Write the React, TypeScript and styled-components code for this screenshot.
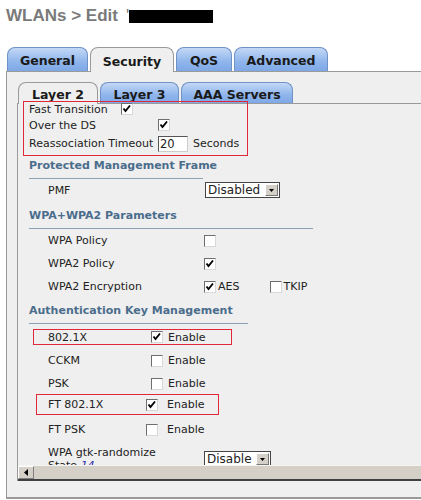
import styled, { createGlobalStyle } from 'styled-components'

const Global = createGlobalStyle`
  html, body {
    margin: 0;
    padding: 0;
    background: #fff;
    overflow: hidden;
  }
  body {
    font-family: "DejaVu Sans", Verdana, sans-serif;
    font-size: 11px;
    color: #222;
  }
`

const Page = styled.div`
  width: 421px;
  height: 500px;
  overflow: hidden;
  padding: 5px 0 0 6px;
  box-sizing: border-box;
`

const Header = styled.div`
  display: flex;
  align-items: center;
  height: 22px;
`

const Title = styled.h1`
  margin: 0;
  font-family: "Liberation Sans", Arial, sans-serif;
  font-size: 17px;
  font-weight: bold;
  color: #7a7a7a;
`

const Quote = styled.span`
  font-family: "Liberation Sans", Arial, sans-serif;
  font-size: 17px;
  color: #7a7a7a;
  margin-left: 8px;
`

const Redacted = styled.span`
  display: inline-block;
  width: 84px;
  height: 13px;
  background: #000;
`

const TabBar = styled.div<{ $top: number; $gap: number }>`
  display: flex;
  align-items: flex-end;
  gap: ${(p) => p.$gap}px;
  margin-top: ${(p) => p.$top}px;
  padding-left: 1px;
  position: relative;
  z-index: 1;
`

const Tab = styled.div<{ $w: number; $active?: boolean; $h: number }>`
  width: ${(p) => p.$w}px;
  height: ${(p) => (p.$active ? p.$h + 1 : p.$h)}px;
  box-sizing: border-box;
  display: flex;
  align-items: center;
  justify-content: center;
  padding-top: 2px;
  border: 1px solid ${(p) => (p.$active ? '#9a9a9a' : '#7092c4')};
  border-bottom: none;
  border-radius: 8px 8px 0 0;
  background: ${(p) =>
    p.$active ? '#efefef' : 'linear-gradient(#c3d8f6, #8fb5ec 60%, #7ea8e6)'};
  font-weight: bold;
  font-size: 12.5px;
  color: #1a1a1a;
  margin-bottom: ${(p) => (p.$active ? '-1px' : '0')};
`

const Panel = styled.div`
  width: 600px;
  height: 428px;
  box-sizing: border-box;
  border-top: 1px solid #9a9a9a;
  border-left: 1px solid #9a9a9a;
  border-bottom: 2px solid #9a9a9a;
  background: #efefef;
  padding: 10px 0 0 10px;
`

const InnerPanel = styled.div`
  border-top: 1px solid #9a9a9a;
  border-left: 1px solid #9a9a9a;
  width: 580px;
`

const Content = styled.div`
  height: 361px;
  padding-left: 11px;
  box-sizing: border-box;
  display: flow-root;
  clip-path: inset(-10px -10px 0 -10px);
  position: relative;
  z-index: 2;
`

const RedBox = styled.div<{ $x: number; $y: number; $w: number; $pad: number }>`
  margin-left: ${(p) => p.$x}px;
  margin-top: ${(p) => p.$y}px;
  width: ${(p) => p.$w}px;
  box-sizing: border-box;
  padding: 1px 1px 1px ${(p) => p.$pad + 1}px;
  outline: 1px solid #e0283a;
  outline-offset: -1px;
`

const Row = styled.div<{ $h: number; $indent?: number; $top?: number }>`
  display: flex;
  align-items: center;
  height: ${(p) => p.$h}px;
  padding-left: ${(p) => p.$indent ?? 0}px;
  margin-top: ${(p) => p.$top ?? 0}px;
  white-space: nowrap;
`

const Label = styled.span<{ $w: number }>`
  display: inline-block;
  width: ${(p) => p.$w}px;
  flex: none;
`

const Heading = styled.div<{ $w: number; $top?: number }>`
  width: ${(p) => p.$w}px;
  height: 22px;
  line-height: 20px;
  margin-top: ${(p) => p.$top ?? 0}px;
  border-bottom: 1px solid #8ea2b6;
  font-weight: bold;
  color: #4b6d8c;
  white-space: nowrap;
`

const Box = styled.span`
  display: inline-flex;
  width: 12px;
  height: 12px;
  box-sizing: border-box;
  flex: none;
  background: #fff;
  border-top: 1px solid #6e6e6e;
  border-left: 1px solid #6e6e6e;
  border-right: 1px solid #d8d8d8;
  border-bottom: 1px solid #d8d8d8;
`

const After = styled.span<{ $gap: number }>`
  margin-left: ${(p) => p.$gap}px;
  display: inline-flex;
`

const TextInput = styled.span`
  display: inline-flex;
  align-items: center;
  width: 30px;
  height: 16px;
  box-sizing: border-box;
  background: #fff;
  border-top: 1px solid #555;
  border-left: 1px solid #555;
  border-right: 1px solid #ccc;
  border-bottom: 1px solid #ccc;
  padding-left: 1px;
  font-size: 11.5px;
`

const Select = styled.span<{ $w: number; $top?: number }>`
  display: inline-flex;
  align-items: center;
  justify-content: space-between;
  width: ${(p) => p.$w}px;
  height: 16px;
  box-sizing: border-box;
  background: #fff;
  border: 1px solid #444;
  padding-left: 2px;
  font-size: 12px;
  flex: none;
  ${(p) => (p.$top !== undefined ? `align-self: flex-start; margin-top: ${p.$top}px;` : '')}
`

const SelectButton = styled.span`
  display: inline-flex;
  align-items: center;
  justify-content: center;
  width: 13px;
  height: 12px;
  margin-right: 1px;
  background: #d4d0c8;
  border: 1px solid;
  border-color: #fff #777 #777 #fff;
  box-sizing: border-box;
`

const TwoLine = styled.span`
  display: inline-block;
  width: 156px;
  line-height: 13px;
  align-self: flex-start;
  padding-top: 5px;
`

const Link = styled.span`
  color: #2a2aa8;
  font-style: italic;
`

const Scrollbar = styled.div`
  display: flex;
  height: 16px;
  box-sizing: border-box;
  background: #d4d0c8;
  border-top: 1px solid #f4f4f0;
  border-bottom: 2px solid #404040;
`

const ScrollButton = styled.span`
  display: inline-flex;
  align-items: center;
  justify-content: center;
  width: 16px;
  box-sizing: border-box;
  border: 1px solid;
  border-color: #fff #808080 #808080 #fff;
  background: #d4d0c8;
`

function Check({ on }: { on?: boolean }) {
  return (
    <Box>
      {on && (
        <svg width="10" height="10" viewBox="0 0 10 10">
          <polyline points="1.5,4.5 3.5,7 8,1.5" fill="none" stroke="#000" strokeWidth="1.9" />
        </svg>
      )}
    </Box>
  )
}

function Arrow() {
  return (
    <svg width="5" height="3" viewBox="0 0 5 3">
      <polygon points="0,0 5,0 2.5,3" fill="#000" />
    </svg>
  )
}

function Dropdown({ value, width, top }: { value: string; width: number; top?: number }) {
  return (
    <Select $w={width} $top={top}>
      {value}
      <SelectButton>
        <Arrow />
      </SelectButton>
    </Select>
  )
}

export default function App() {
  return (
    <Page>
      <Global />
      <Header>
        <Title>WLANs &gt; Edit</Title>
        <Quote>'</Quote>
        <Redacted />
      </Header>

      <TabBar $top={20} $gap={2}>
        <Tab $w={81} $h={24}>General</Tab>
        <Tab $w={84} $h={24} $active>Security</Tab>
        <Tab $w={56} $h={24}>QoS</Tab>
        <Tab $w={94} $h={24}>Advanced</Tab>
      </TabBar>

      <Panel>
        <TabBar $top={0} $gap={2}>
          <Tab $w={80} $h={21} $active>Layer 2</Tab>
          <Tab $w={79} $h={21}>Layer 3</Tab>
          <Tab $w={112} $h={21}>AAA Servers</Tab>
        </TabBar>
        <InnerPanel>
          <Content>
            <RedBox $x={-6} $y={-3} $w={225} $pad={5}>
              <Row $h={14}>
                <Label $w={92}>Fast Transition</Label>
                <Check on />
              </Row>
              <Row $h={18}>
                <Label $w={129}>Over the DS</Label>
                <Check on />
              </Row>
              <Row $h={19}>
                <Label $w={129}>Reassociation Timeout</Label>
                <TextInput>20</TextInput>
                <After $gap={5}>Seconds</After>
              </Row>
              <div style={{ height: 2 }} />
            </RedBox>

            <Heading $w={174}>Protected Management Frame</Heading>
            <Row $h={22} $indent={19}>
              <Label $w={157}>PMF</Label>
              <Dropdown value="Disabled" width={75} />
            </Row>

            <Heading $w={284} $top={5}>WPA+WPA2 Parameters</Heading>
            <Row $h={23} $indent={19}>
              <Label $w={156}>WPA Policy</Label>
              <Check />
            </Row>
            <Row $h={23} $indent={19}>
              <Label $w={156}>WPA2 Policy</Label>
              <Check on />
            </Row>
            <Row $h={23} $indent={19}>
              <Label $w={156}>WPA2 Encryption</Label>
              <Check on />
              <After $gap={2}>AES</After>
              <After $gap={31}>
                <Check />
              </After>
              <After $gap={1}>TKIP</After>
            </Row>

            <Heading $w={219} $top={3}>Authentication Key Management</Heading>
            <RedBox $x={4} $y={5} $w={199} $pad={14}>
              <Row $h={14}>
                <Label $w={103}>802.1X</Label>
                <Check on />
                <After $gap={5}>Enable</After>
              </Row>
            </RedBox>
            <Row $h={23} $indent={19} $top={4}>
              <Label $w={103}>CCKM</Label>
              <Check />
              <After $gap={5}>Enable</After>
            </Row>
            <Row $h={23} $indent={19}>
              <Label $w={103}>PSK</Label>
              <Check />
              <After $gap={5}>Enable</After>
            </Row>
            <RedBox $x={7} $y={-1} $w={183} $pad={11}>
              <Row $h={19}>
                <Label $w={98}>FT 802.1X</Label>
                <Check on />
                <After $gap={9}>Enable</After>
              </Row>
            </RedBox>
            <Row $h={23} $indent={19} $top={3}>
              <Label $w={98}>FT PSK</Label>
              <Check />
              <After $gap={9}>Enable</After>
            </Row>
            <Row $h={40} $indent={19}>
              <TwoLine>
                WPA gtk-randomize
                <br />
                State <Link>14</Link>
              </TwoLine>
              <Dropdown value="Disable" width={67} top={10} />
            </Row>
          </Content>
          <Scrollbar>
            <ScrollButton>
              <svg width="4" height="7" viewBox="0 0 4 7">
                <polygon points="4,0 4,7 0,3.5" fill="#000" />
              </svg>
            </ScrollButton>
          </Scrollbar>
        </InnerPanel>
      </Panel>
    </Page>
  )
}
